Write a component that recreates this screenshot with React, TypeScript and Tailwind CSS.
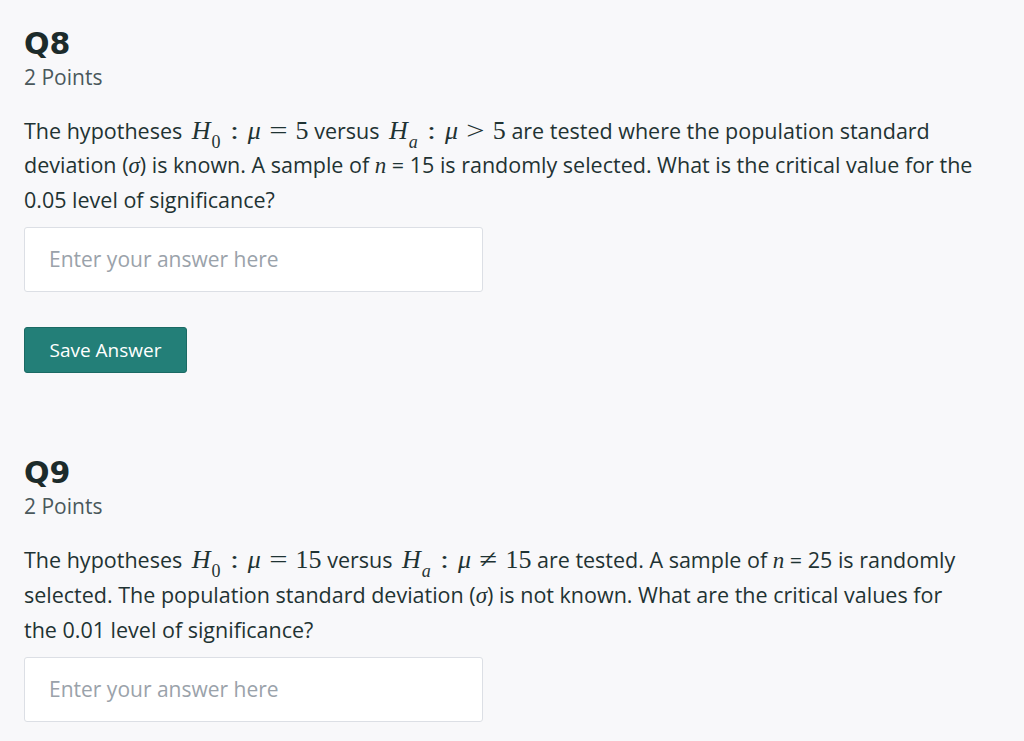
import React from 'react'

const sans = { fontFamily: '"Open Sans", "Liberation Sans", sans-serif' }

function M({ children }: { children: React.ReactNode }) {
  return (
    <span className="ml-[4px] text-[26px] leading-none" style={{ fontFamily: '"Liberation Serif", "DejaVu Serif", serif' }}>
      {children}
    </span>
  )
}

function I({ children }: { children: React.ReactNode }) {
  return <i className="italic">{children}</i>
}

function Sub({ children }: { children: React.ReactNode }) {
  return <sub className="ml-[1px] text-[18px] align-[-4px] leading-none">{children}</sub>
}

function Op({ children }: { children: React.ReactNode }) {
  return <span className="mx-[10px] inline-block scale-x-125">{children}</span>
}

function V({ children }: { children: React.ReactNode }) {
  return (
    <I>
      <span style={{ fontFamily: '"Liberation Serif", serif' }} className="text-[23px]">
        {children}
      </span>
    </I>
  )
}

function Question({
  num,
  lines,
  showSave,
}: {
  num: string
  lines: React.ReactNode[]
  showSave: boolean
}) {
  return (
    <section className="pt-[30px]">
      <h2
        className="text-[30px] font-bold leading-[28px] text-[#1c2b2b]"
        style={{ fontFamily: '"DejaVu Sans", "Open Sans", sans-serif' }}
      >
        {num}
      </h2>
      <div className="mt-[7px] text-[21px] leading-[24px] text-[#4a585c]">2 Points</div>
      <div className="mt-[25px] text-[21.5px] leading-[34px] text-[#1f3333]">
        {lines.map((l, i) => (
          <div key={i} className="whitespace-nowrap">{l}</div>
        ))}
      </div>
      <div className="mt-[10px] w-[459px] h-[65px] rounded-[3px] border border-[#dcdfe5] bg-white flex items-center px-[24px]">
        <input
          className="w-full bg-transparent outline-none text-[21px] text-[#1f3333] placeholder:text-[#9aa2aa]"
          style={sans}
          placeholder="Enter your answer here"
        />
      </div>
      {showSave && (
        <button className="mt-[35px] h-[46px] w-[163px] rounded-[3px] border border-[#1b6a64] bg-[#237f78] text-white text-[19px]">
          Save Answer
        </button>
      )}
    </section>
  )
}

export default function App() {
  const q8 = [
    <>
      The hypotheses{' '}
      <M>
        <I>H</I>
        <Sub>0</Sub>
        <Op>:</Op>
        <I>μ</I>
        <Op>=</Op>5
      </M>{' '}
      versus{' '}
      <M>
        <I>H</I>
        <Sub>
          <I>a</I>
        </Sub>
        <Op>:</Op>
        <I>μ</I>
        <Op>&gt;</Op>5
      </M>{' '}
      are tested where the population standard
    </>,
    <>
      deviation (<V>σ</V>) is known. A sample of <V>n</V> = 15 is randomly selected. What is the critical value for the
    </>,
    <>0.05 level of significance?</>,
  ]
  const q9 = [
    <>
      The hypotheses{' '}
      <M>
        <I>H</I>
        <Sub>0</Sub>
        <Op>:</Op>
        <I>μ</I>
        <Op>=</Op>15
      </M>{' '}
      versus{' '}
      <M>
        <I>H</I>
        <Sub>
          <I>a</I>
        </Sub>
        <Op>:</Op>
        <I>μ</I>
        <Op>≠</Op>15
      </M>{' '}
      are tested. A sample of <V>n</V> = 25 is randomly
    </>,
    <>
      selected. The population standard deviation (<V>σ</V>) is not known. What are the critical values for
    </>,
    <>the 0.01 level of significance?</>,
  ]

  return (
    <div className="min-h-[741px] h-[741px] overflow-hidden bg-[#f8f8fa] px-[24px]" style={sans}>
      <Question num="Q8" lines={q8} showSave />
      <div className="h-[56px]" />
      <Question num="Q9" lines={q9} showSave={false} />
    </div>
  )
}
